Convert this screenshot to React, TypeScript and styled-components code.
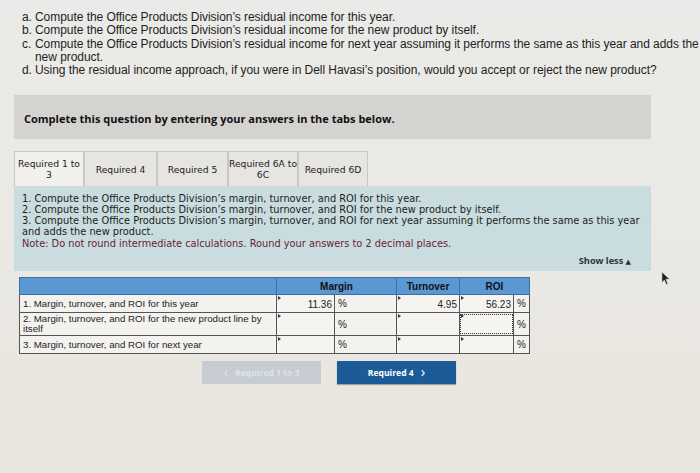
import React from 'react';
import styled, { createGlobalStyle } from 'styled-components';

const GlobalStyle = createGlobalStyle`
    html, body {
        margin: 0;
        padding: 0;
        overflow: hidden;
        background: #e9e7e2;
    }
`;

const questions = [
    { key: 'a.', text: "Compute the Office Products Division’s residual income for this year." },
    { key: 'b.', text: "Compute the Office Products Division’s residual income for the new product by itself." },
    {
        key: 'c.',
        text: "Compute the Office Products Division’s residual income for next year assuming it performs the same as this year and adds the new product.",
    },
    { key: 'd.', text: "Using the residual income approach, if you were in Dell Havasi’s position, would you accept or reject the new product?" },
];

const tabs = [
    { lines: ['Required 1 to', '3'], width: 70, active: true },
    { lines: ['Required 4'], width: 73 },
    { lines: ['Required 5'], width: 71 },
    { lines: ['Required 6A to', '6C'], width: 70 },
    { lines: ['Required 6D'], width: 70 },
];

const rows = [
    { label: '1. Margin, turnover, and ROI for this year', margin: '11.36', turnover: '4.95', roi: '56.23', height: 17 },
    { label: '2. Margin, turnover, and ROI for the new product line by itself', margin: '', turnover: '', roi: '', height: 22 },
    { label: '3. Margin, turnover, and ROI for next year', margin: '', turnover: '', roi: '', height: 17 },
];

export default function App() {
    return (
        <Page>
            <GlobalStyle />
            <QuestionList>
                {questions.map((q) => (
                    <QuestionItem key={q.key}>
                        <QuestionKey>{q.key}</QuestionKey>
                        <span>{q.text}</span>
                    </QuestionItem>
                ))}
            </QuestionList>

            <Instruction>Complete this question by entering your answers in the tabs below.</Instruction>

            <TabBar>
                {tabs.map((t) => (
                    <Tab key={t.lines.join(' ')} $active={!!t.active} $width={t.width}>
                        {t.lines.map((l) => (
                            <TabLine key={l}>{l}</TabLine>
                        ))}
                    </Tab>
                ))}
            </TabBar>

            <Panel>
                <PanelText>
                    1. Compute the Office Products Division’s margin, turnover, and ROI for this year.
                    <br />
                    2. Compute the Office Products Division’s margin, turnover, and ROI for the new product by itself.
                    <br />
                    3. Compute the Office Products Division’s margin, turnover, and ROI for next year assuming it performs the same as this year
                    and adds the new product.
                </PanelText>
                <Note>Note: Do not round intermediate calculations. Round your answers to 2 decimal places.</Note>
                <ShowLess>
                    Show less <span>▲</span>
                </ShowLess>
            </Panel>

            <Table>
                <thead>
                    <tr>
                        <HeadCell $width={256} />
                        <HeadCell colSpan={2}>Margin</HeadCell>
                        <HeadCell $width={62}>Turnover</HeadCell>
                        <HeadCell colSpan={2}>ROI</HeadCell>
                    </tr>
                </thead>
                <tbody>
                    {rows.map((r, i) => (
                        <tr key={i}>
                            <LabelCell $height={r.height}>{r.label}</LabelCell>
                            <InputCell $width={57}>
                                <Field $dotted={false}>{r.margin}</Field>
                            </InputCell>
                            <UnitCell $width={62}>%</UnitCell>
                            <InputCell $width={62}>
                                <Field $dotted={false}>{r.turnover}</Field>
                            </InputCell>
                            <InputCell $width={53}>
                                <Field $dotted={i === 1}>{r.roi}</Field>
                            </InputCell>
                            <UnitCell $width={16}>%</UnitCell>
                        </tr>
                    ))}
                </tbody>
            </Table>

            <NavRow>
                <NavButton $disabled>
                    <Chevron>‹</Chevron> Required 1 to 3
                </NavButton>
                <NavButton>
                    Required 4 <Chevron>›</Chevron>
                </NavButton>
            </NavRow>

            <Cursor viewBox="0 0 12 18" width="10" height="15">
                <path d="M1 1 L1 14 L4 11 L6.5 16.5 L8.5 15.5 L6 10 L10.5 10 Z" fill="#222" stroke="#eee" strokeWidth="0.8" />
            </Cursor>
        </Page>
    );
}

const Page = styled.div`
    position: relative;
    width: 700px;
    height: 473px;
    padding: 11px 0 0 14px;
    box-sizing: border-box;
    background: linear-gradient(180deg, #eaeae8 0%, #ebe9e4 50%, #e8e5de 100%);
`;

const QuestionList = styled.div`
    width: 686px;
    font-family: 'Liberation Sans', Arial, sans-serif;
    font-size: 12px;
    line-height: 13.3px;
    color: #1e1e1e;
    letter-spacing: -0.05px;
`;

const QuestionItem = styled.div`
    display: flex;
    padding-left: 8px;
`;

const QuestionKey = styled.span`
    flex: 0 0 13px;
`;

const Instruction = styled.div`
    margin-top: 18px;
    width: 637px;
    height: 44px;
    box-sizing: border-box;
    padding: 16px 0 0 10px;
    background: #d4d3d0;
    font-family: 'Open Sans', 'DejaVu Sans', sans-serif;
    font-weight: 700;
    font-size: 11px;
    color: #111;
`;

const TabBar = styled.div`
    display: flex;
    margin-top: 12px;
    height: 35px;
`;

const Tab = styled.div<{ $active: boolean; $width: number }>`
    width: ${(p) => p.$width}px;
    box-sizing: border-box;
    display: flex;
    flex-direction: column;
    align-items: center;
    justify-content: center;
    text-align: center;
    border: 1px solid #c9c8c4;
    border-bottom: none;
    background: ${(p) => (p.$active ? '#f1f0ec' : '#e6e5e1')};
    font-family: 'DejaVu Sans', Verdana, sans-serif;
    font-size: 9.2px;
    line-height: 11px;
    color: #222;
`;

const TabLine = styled.span`
    white-space: nowrap;
`;

const Panel = styled.div`
    width: 637px;
    height: 85px;
    box-sizing: border-box;
    padding: 7px 0 0 8px;
    background: #c9dcdf;
    font-family: 'DejaVu Sans', Verdana, sans-serif;
    font-size: 9.8px;
    line-height: 11px;
    color: #1c1c1c;
    display: flex;
    flex-direction: column;
`;

const PanelText = styled.div`
    padding-right: 4px;
`;

const Note = styled.div`
    margin-top: 1px;
    color: #6a2232;
`;

const ShowLess = styled.div`
    align-self: flex-end;
    margin: 6px 20px 0 0;
    font-family: 'Open Sans', 'DejaVu Sans', sans-serif;
    font-weight: 700;
    font-size: 9.2px;
    color: #2a3440;

    span {
        font-size: 7px;
    }
`;

const Table = styled.table`
    margin: 6px 0 0 5px;
    border-collapse: collapse;
    font-family: 'Liberation Sans', Arial, sans-serif;
    font-size: 9.7px;
    color: #222;
`;

const HeadCell = styled.th<{ $width?: number }>`
    ${(p) => (p.$width ? `width: ${p.$width}px;` : '')}
    height: 16px;
    padding: 0;
    background: #5b97d2;
    border: 1px solid #3d6f9f;
    font-weight: 700;
    font-size: 10px;
    color: #111;
    text-align: center;
`;

const LabelCell = styled.td<{ $height: number }>`
    height: ${(p) => p.$height}px;
    padding: 0 3px;
    border: 1px solid #555;
    background: #f3f2ee;
    line-height: 10px;
    vertical-align: middle;
`;

const InputCell = styled.td<{ $width: number }>`
    width: ${(p) => p.$width}px;
    padding: 0;
    border: 1px solid #555;
    background: #f5f4f0;
    position: relative;

    &::before {
        content: '';
        position: absolute;
        left: 1px;
        top: 1px;
        border-left: 3px solid #1c3c6c;
        border-top: 2px solid transparent;
        border-bottom: 2px solid transparent;
    }
`;

const Field = styled.div<{ $dotted: boolean }>`
    height: ${(p) => (p.$dotted ? 20 : 14)}px;
    line-height: 13px;
    box-sizing: border-box;
    text-align: right;
    padding: 1px 2px 0 0;
    font-size: 10px;
    border: ${(p) => (p.$dotted ? '1px dotted #333' : 'none')};
`;

const UnitCell = styled.td<{ $width: number }>`
    width: ${(p) => p.$width}px;
    padding: 0 3px;
    border: 1px solid #555;
    background: #f3f2ee;
    font-size: 10px;
    text-align: left;
    box-sizing: border-box;
`;

const NavRow = styled.div`
    display: flex;
    gap: 16px;
    margin: 7px 0 0 188px;
`;

const NavButton = styled.div<{ $disabled?: boolean }>`
    width: 119px;
    height: 23px;
    display: flex;
    align-items: center;
    justify-content: center;
    gap: 7px;
    background: ${(p) => (p.$disabled ? '#c6ccd2' : '#1b5c98')};
    color: ${(p) => (p.$disabled ? '#dde3e9' : '#ffffff')};
    font-family: 'Open Sans', 'DejaVu Sans', sans-serif;
    font-weight: 700;
    font-size: 8.6px;
    box-shadow: ${(p) => (p.$disabled ? 'none' : '0 1px 1px rgba(0,0,0,0.3)')};
`;

const Chevron = styled.span`
    font-size: 15px;
    font-weight: 400;
    line-height: 1;
    margin-top: -2px;
`;

const Cursor = styled.svg`
    position: absolute;
    left: 661px;
    top: 271px;
`;
